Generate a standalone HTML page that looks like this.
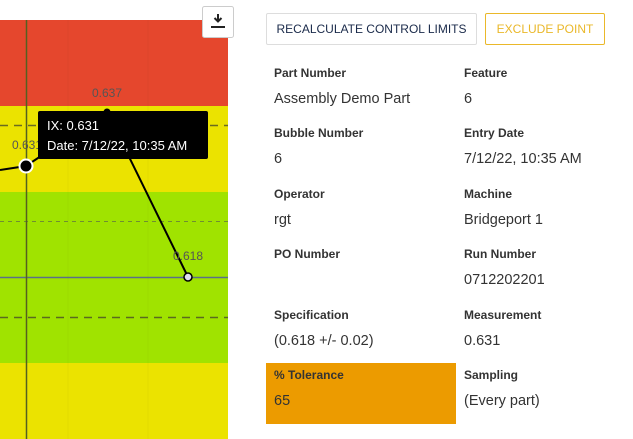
<!DOCTYPE html>
<html><head><meta charset="utf-8"><style>
body{margin:0;width:633px;height:439px;background:#fff;font-family:"Liberation Sans",sans-serif;position:relative;overflow:hidden}
.a{position:absolute}
.lbl{position:absolute;font-size:12px;font-weight:bold;color:#333}
.val{position:absolute;font-size:14.5px;color:#333}
.btn{position:absolute;box-sizing:border-box;font-size:12px;display:flex;align-items:center;justify-content:center;border-radius:2px}
</style></head><body>
<svg class="a" style="left:0;top:0" width="240" height="439">
<rect x="0" y="20" width="228" height="86" fill="#e5472d"/>
<rect x="0" y="106" width="228" height="86" fill="#ebe300"/>
<rect x="0" y="192" width="228" height="171" fill="#a0e300"/>
<rect x="0" y="363" width="228" height="76" fill="#ebe300"/>
<line x1="68" y1="20" x2="68" y2="439" stroke="rgba(0,0,0,0.03)"/>
<line x1="148" y1="20" x2="148" y2="439" stroke="rgba(0,0,0,0.03)"/>
<line x1="0" y1="125.5" x2="228" y2="125.5" stroke="#6b6b20" stroke-width="1.5" stroke-dasharray="8,6"/>
<line x1="0" y1="221.5" x2="228" y2="221.5" stroke="#6f8f30" stroke-width="1" stroke-dasharray="4,4"/>
<line x1="0" y1="317.5" x2="228" y2="317.5" stroke="#5a6a20" stroke-width="1.5" stroke-dasharray="8,6"/>
<line x1="0" y1="277.5" x2="228" y2="277.5" stroke="#5a6f8a" stroke-width="1.5"/>
<line x1="26.5" y1="20" x2="26.5" y2="439" stroke="#556020" stroke-width="1.5"/>
<polyline points="0,170 26,166 107,112 188,277" fill="none" stroke="#000" stroke-width="2"/>
<circle cx="26" cy="166" r="6.5" fill="#000" stroke="#fff" stroke-width="2"/>
<circle cx="107" cy="112" r="3.5" fill="#000"/>
<circle cx="188" cy="277" r="4" fill="#dde" stroke="#000" stroke-width="1.5"/>
<text x="92" y="97" font-size="12" fill="#555" font-family="Liberation Sans">0.637</text>
<text x="173" y="260" font-size="12" fill="#555" font-family="Liberation Sans">0.618</text>
<text x="12" y="149" font-size="12" fill="#555" font-family="Liberation Sans">0.631</text>
<rect x="38" y="111" width="170" height="48" rx="2" fill="#000"/>
<text x="47" y="130" font-size="13" fill="#fff" font-family="Liberation Sans">IX: 0.631</text>
<text x="47" y="150" font-size="13" fill="#fff" font-family="Liberation Sans">Date: 7/12/22, 10:35 AM</text>
<rect x="202.5" y="6.5" width="31" height="31" rx="2" fill="#fff" stroke="#ccc"/>
<path d="M218 14v7M214.5 18l3.5 3.5 3.5-3.5" stroke="#222" stroke-width="2" fill="none"/>
<rect x="211" y="26" width="14" height="2" fill="#222"/>
</svg>
<div class="btn" style="left:266px;top:13px;width:211px;height:32px;border:1px solid #ddd;color:#1a2a4a">RECALCULATE CONTROL LIMITS</div>
<div class="btn" style="left:485px;top:13px;width:120px;height:32px;border:1px solid #eab82a;color:#eab82a">EXCLUDE POINT</div>
<div class="a" style="left:266px;top:363px;width:190px;height:61px;background:#ec9b00"></div>
<div class="lbl" style="left:274px;top:66px">Part Number</div><div class="val" style="left:274px;top:91px">Assembly Demo Part</div>
<div class="lbl" style="left:464px;top:66px">Feature</div><div class="val" style="left:464px;top:91px">6</div>
<div class="lbl" style="left:274px;top:126px">Bubble Number</div><div class="val" style="left:274px;top:151px">6</div>
<div class="lbl" style="left:464px;top:126px">Entry Date</div><div class="val" style="left:464px;top:151px">7/12/22, 10:35 AM</div>
<div class="lbl" style="left:274px;top:187px">Operator</div><div class="val" style="left:274px;top:212px">rgt</div>
<div class="lbl" style="left:464px;top:187px">Machine</div><div class="val" style="left:464px;top:212px">Bridgeport 1</div>
<div class="lbl" style="left:274px;top:247px">PO Number</div>
<div class="lbl" style="left:464px;top:247px">Run Number</div><div class="val" style="left:464px;top:272px">0712202201</div>
<div class="lbl" style="left:274px;top:308px">Specification</div><div class="val" style="left:274px;top:333px">(0.618 +/- 0.02)</div>
<div class="lbl" style="left:464px;top:308px">Measurement</div><div class="val" style="left:464px;top:333px">0.631</div>
<div class="lbl" style="left:274px;top:368px">% Tolerance</div><div class="val" style="left:274px;top:393px">65</div>
<div class="lbl" style="left:464px;top:368px">Sampling</div><div class="val" style="left:464px;top:393px">(Every part)</div>
</body></html>
